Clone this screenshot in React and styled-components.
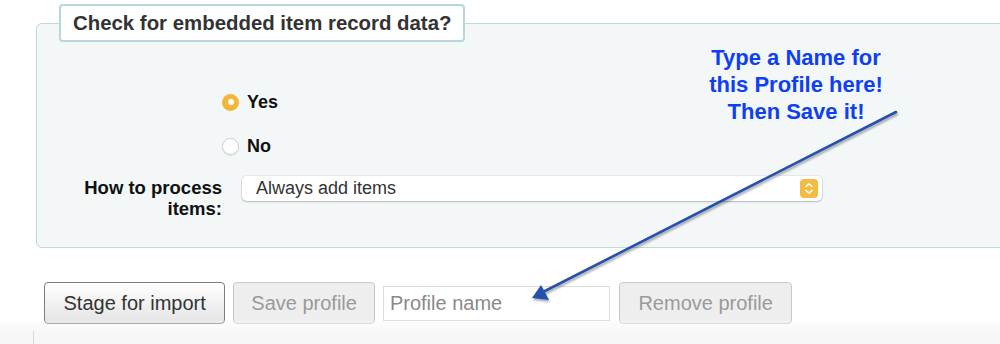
import React from "react";
import styled, { createGlobalStyle } from "styled-components";

const GlobalStyle = createGlobalStyle`
  html, body {
    margin: 0;
    padding: 0;
    background: #fff;
    font-family: "Liberation Sans", Arial, sans-serif;
    color: #333;
  }
`;

const Page = styled.div`
  position: relative;
  width: 1000px;
  height: 344px;
  overflow: hidden;
  padding-top: 4px;
  box-sizing: border-box;
`;

const Fieldset = styled.fieldset`
  margin: 0 -20px 0 36px;
  padding: 0;
  border: 1px solid #bcdadd;
  border-radius: 6px;
  background: #f3f7f8;
  min-width: 0;
`;

const Legend = styled.legend`
  margin-left: 22px;
  padding: 0 12px;
  background: #fff;
  border: 2px solid #b5d8db;
  border-radius: 4px;
  font-size: 20.4px;
  font-weight: bold;
  line-height: 34px;
  color: #333;
`;

const Body = styled.div`
  padding: 38px 0 28px;
`;

const RadioList = styled.div`
  display: flex;
  flex-direction: column;
  padding-left: 185px;
  margin-bottom: 8px;
`;

const RadioRow = styled.label`
  display: flex;
  align-items: center;
  gap: 8px;
  height: 44px;
  font-size: 18px;
  font-weight: bold;
  color: #111;
`;

const RadioDot = styled.span`
  width: 17px;
  height: 17px;
  border-radius: 50%;
  box-sizing: border-box;
  flex: none;
  background: ${(p) => (p.$on ? "#f1b73b" : "#fff")};
  border: ${(p) => (p.$on ? "none" : "1px solid #cfcfcf")};
  box-shadow: ${(p) => (p.$on ? "none" : "0 1px 1px rgba(0,0,0,0.08)")};
  display: flex;
  align-items: center;
  justify-content: center;

  &::after {
    content: "";
    display: ${(p) => (p.$on ? "block" : "none")};
    width: 6px;
    height: 6px;
    border-radius: 50%;
    background: #fff;
  }
`;

const FieldRow = styled.div`
  display: flex;
  align-items: flex-start;
  gap: 20px;
`;

const FieldLabel = styled.div`
  width: 185px;
  text-align: right;
  font-size: 18.5px;
  font-weight: bold;
  line-height: 21px;
  color: #111;
  padding-top: 1px;
`;

const Select = styled.div`
  width: 580px;
  height: 25px;
  box-sizing: border-box;
  background: #fff;
  border-radius: 5px;
  box-shadow: 0 0 0 1px rgba(0, 0, 0, 0.05), 0 1px 2px rgba(0, 0, 0, 0.22);
  display: flex;
  align-items: center;
  justify-content: space-between;
  padding: 0 4px 0 14px;
  font-size: 18px;
  color: #333;
`;

const Stepper = styled.span`
  width: 18px;
  height: 19px;
  border-radius: 4px;
  background: #f2bc42;
  display: flex;
  align-items: center;
  justify-content: center;
`;

const Actions = styled.div`
  display: flex;
  align-items: center;
  gap: 8px;
  margin: 34px 0 0 44px;
`;

const Button = styled.button`
  height: 42px;
  padding: 0 ${(p) => p.$pad || 17}px;
  font-family: inherit;
  font-size: 20px;
  border-radius: 4px;
  border: 1px solid ${(p) => (p.disabled ? "#c9c9c9" : "#7d7d7d")};
  color: ${(p) => (p.disabled ? "#9a9a9a" : "#333")};
  background: ${(p) =>
    p.disabled ? "#eeeeee" : "linear-gradient(#ffffff, #e4e4e4)"};
  margin-left: ${(p) => p.$gap || 0}px;
`;

const Input = styled.input`
  width: 227px;
  height: 35px;
  box-sizing: border-box;
  border: 1px solid #dcdcdc;
  padding: 0 6px;
  font-family: inherit;
  font-size: 20px;
  background: #fff;
  outline: none;

  &::placeholder {
    color: #8a8a8a;
  }
`;

const Footer = styled.div`
  position: absolute;
  left: 0;
  right: 0;
  bottom: 0;
  height: 13px;
  border-top: 1px solid #e6e6e6;
  background: #f7f7f7;
  display: flex;

  &::before {
    content: "";
    position: absolute;
    left: 0;
    right: 0;
    top: -12px;
    height: 12px;
    background: linear-gradient(rgba(248, 248, 248, 0), #f8f8f8);
  }
`;

const FooterSide = styled.div`
  width: 33px;
  border-right: 1px solid #d9d9d9;
`;

const Note = styled.div`
  position: absolute;
  left: 696px;
  top: 44px;
  width: 200px;
  text-align: center;
  font-size: 22px;
  font-weight: bold;
  line-height: 27px;
  color: #0f3ff3;
`;

const Arrow = styled.svg`
  position: absolute;
  left: 0;
  top: 0;
  pointer-events: none;
`;

export default function App() {
  return (
    <>
      <GlobalStyle />
      <Page>
        <Fieldset>
          <Legend>Check for embedded item record data?</Legend>
          <Body>
            <RadioList>
              <RadioRow>
                <RadioDot $on />
                Yes
              </RadioRow>
              <RadioRow>
                <RadioDot />
                No
              </RadioRow>
            </RadioList>
            <FieldRow>
              <FieldLabel>
                How to process
                <br />
                items:
              </FieldLabel>
              <Select>
                Always add items
                <Stepper>
                  <svg width="10" height="13" viewBox="0 0 10 13">
                    <path
                      d="M2 4.5 L5 1.8 L8 4.5 M2 8.5 L5 11.2 L8 8.5"
                      fill="none"
                      stroke="#fff"
                      strokeWidth="1.6"
                      strokeLinecap="round"
                      strokeLinejoin="round"
                    />
                  </svg>
                </Stepper>
              </Select>
            </FieldRow>
          </Body>
        </Fieldset>

        <Actions>
          <Button $pad={18.5}>Stage for import</Button>
          <Button disabled>Save profile</Button>
          <Input placeholder="Profile name" />
          <Button disabled $gap={1} $pad={18.5}>
            Remove profile
          </Button>
        </Actions>

        <Footer>
          <FooterSide />
        </Footer>

        <Note>
          Type a Name for
          <br />
          this Profile here!
          <br />
          Then Save it!
        </Note>

        <Arrow width="1000" height="344" viewBox="0 0 1000 344">
          <defs>
            <filter id="soft" x="-10%" y="-10%" width="120%" height="120%">
              <feGaussianBlur in="SourceAlpha" stdDeviation="1.2" />
              <feOffset dx="1" dy="1.5" result="b" />
              <feComponentTransfer>
                <feFuncA type="linear" slope="0.35" />
              </feComponentTransfer>
              <feMerge>
                <feMergeNode />
                <feMergeNode in="SourceGraphic" />
              </feMerge>
            </filter>
          </defs>
          <g filter="url(#soft)">
            <line
              x1="896"
              y1="112"
              x2="543"
              y2="292"
              stroke="#2551ab"
              strokeWidth="2.6"
              strokeLinecap="round"
            />
            <polygon points="532,298 541,285 549,300" fill="#2551ab" />
          </g>
        </Arrow>
      </Page>
    </>
  );
}
